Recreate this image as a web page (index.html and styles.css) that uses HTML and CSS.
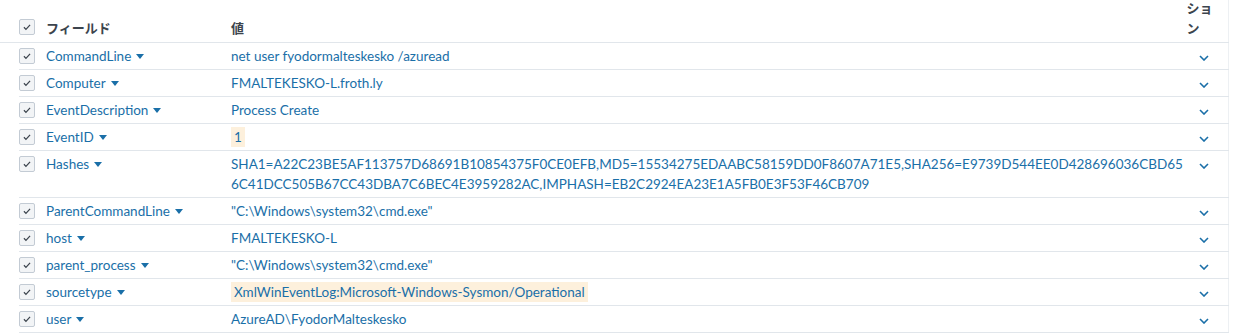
FILE: index.html
```html
<!DOCTYPE html>
<html lang="ja">

<head>
    <meta charset="UTF-8">
    <title>フィールド</title>
    <link rel="stylesheet" href="styles.css">
</head>

<body>
    <table class="fields">
        <colgroup>
            <col class="col-gap">
            <col class="col-check">
            <col class="col-name">
            <col>
            <col class="col-actions">
        </colgroup>
        <thead>
            <tr>
                <th></th>
                <th><span class="check"><svg viewBox="0 0 16 16"><path d="M4.5 8.3l2.3 2.4 4.7-5.2"/></svg></span></th>
                <th>フィールド</th>
                <th>値</th>
                <th class="actions-head">アクション</th>
            </tr>
        </thead>
        <tbody>
            <tr>
                <td></td>
                <td><span class="check"><svg viewBox="0 0 16 16"><path d="M4.5 8.3l2.3 2.4 4.7-5.2"/></svg></span></td>
                <td><a class="field">CommandLine<i class="caret"></i></a></td>
                <td class="value">net user fyodormalteskesko /azuread</td>
                <td class="actions"><svg class="chevron" viewBox="0 0 10 6"><path d="M1 1l4 4 4-4"/></svg></td>
            </tr>
            <tr>
                <td></td>
                <td><span class="check"><svg viewBox="0 0 16 16"><path d="M4.5 8.3l2.3 2.4 4.7-5.2"/></svg></span></td>
                <td><a class="field">Computer<i class="caret"></i></a></td>
                <td class="value">FMALTEKESKO-L.froth.ly</td>
                <td class="actions"><svg class="chevron" viewBox="0 0 10 6"><path d="M1 1l4 4 4-4"/></svg></td>
            </tr>
            <tr>
                <td></td>
                <td><span class="check"><svg viewBox="0 0 16 16"><path d="M4.5 8.3l2.3 2.4 4.7-5.2"/></svg></span></td>
                <td><a class="field">EventDescription<i class="caret"></i></a></td>
                <td class="value">Process Create</td>
                <td class="actions"><svg class="chevron" viewBox="0 0 10 6"><path d="M1 1l4 4 4-4"/></svg></td>
            </tr>
            <tr>
                <td></td>
                <td><span class="check"><svg viewBox="0 0 16 16"><path d="M4.5 8.3l2.3 2.4 4.7-5.2"/></svg></span></td>
                <td><a class="field">EventID<i class="caret"></i></a></td>
                <td class="value"><span class="mark">1</span></td>
                <td class="actions"><svg class="chevron" viewBox="0 0 10 6"><path d="M1 1l4 4 4-4"/></svg></td>
            </tr>
            <tr>
                <td></td>
                <td><span class="check"><svg viewBox="0 0 16 16"><path d="M4.5 8.3l2.3 2.4 4.7-5.2"/></svg></span></td>
                <td><a class="field">Hashes<i class="caret"></i></a></td>
                <td class="value">SHA1=A22C23BE5AF113757D68691B10854375F0CE0EFB,MD5=15534275EDAABC58159DD0F8607A71E5,SHA256=E9739D544EE0D428696036CBD65<wbr>6C41DCC505B67CC43DBA7C6BEC4E3959282AC,IMPHASH=EB2C2924EA23E1A5FB0E3F53F46CB709</td>
                <td class="actions"><svg class="chevron" viewBox="0 0 10 6"><path d="M1 1l4 4 4-4"/></svg></td>
            </tr>
            <tr>
                <td></td>
                <td><span class="check"><svg viewBox="0 0 16 16"><path d="M4.5 8.3l2.3 2.4 4.7-5.2"/></svg></span></td>
                <td><a class="field">ParentCommandLine<i class="caret"></i></a></td>
                <td class="value">"C:\Windows\system32\cmd.exe"</td>
                <td class="actions"><svg class="chevron" viewBox="0 0 10 6"><path d="M1 1l4 4 4-4"/></svg></td>
            </tr>
            <tr>
                <td></td>
                <td><span class="check"><svg viewBox="0 0 16 16"><path d="M4.5 8.3l2.3 2.4 4.7-5.2"/></svg></span></td>
                <td><a class="field">host<i class="caret"></i></a></td>
                <td class="value">FMALTEKESKO-L</td>
                <td class="actions"><svg class="chevron" viewBox="0 0 10 6"><path d="M1 1l4 4 4-4"/></svg></td>
            </tr>
            <tr>
                <td></td>
                <td><span class="check"><svg viewBox="0 0 16 16"><path d="M4.5 8.3l2.3 2.4 4.7-5.2"/></svg></span></td>
                <td><a class="field">parent_process<i class="caret"></i></a></td>
                <td class="value">"C:\Windows\system32\cmd.exe"</td>
                <td class="actions"><svg class="chevron" viewBox="0 0 10 6"><path d="M1 1l4 4 4-4"/></svg></td>
            </tr>
            <tr>
                <td></td>
                <td><span class="check"><svg viewBox="0 0 16 16"><path d="M4.5 8.3l2.3 2.4 4.7-5.2"/></svg></span></td>
                <td><a class="field">sourcetype<i class="caret"></i></a></td>
                <td class="value"><span class="mark">XmlWinEventLog:Microsoft-Windows-Sysmon/Operational</span></td>
                <td class="actions"><svg class="chevron" viewBox="0 0 10 6"><path d="M1 1l4 4 4-4"/></svg></td>
            </tr>
            <tr>
                <td></td>
                <td><span class="check"><svg viewBox="0 0 16 16"><path d="M4.5 8.3l2.3 2.4 4.7-5.2"/></svg></span></td>
                <td><a class="field">user<i class="caret"></i></a></td>
                <td class="value">AzureAD\FyodorMalteskesko</td>
                <td class="actions"><svg class="chevron" viewBox="0 0 10 6"><path d="M1 1l4 4 4-4"/></svg></td>
            </tr>
        </tbody>
    </table>
</body>

</html>
```

FILE: styles.css
```css
* {
    margin: 0;
    padding: 0;
    box-sizing: border-box;
}

body {
    background: #ffffff;
    font-family: 'Lato', 'Noto Sans CJK JP', sans-serif;
    font-size: 13.5px;
    color: #3c444d;
    overflow: hidden;
}

.fields {
    width: 1229px;
    margin-top: -26px;
    border-collapse: collapse;
    table-layout: fixed;
    border-right: 1px solid #edf0f3;
}

.col-gap {
    width: 19px;
}

.col-check {
    width: 27px;
}

.col-name {
    width: 185px;
}

.col-actions {
    width: 49px;
}

.fields th {
    text-align: left;
    vertical-align: bottom;
    font-family: 'Noto Sans CJK JP', sans-serif;
    font-size: 13px;
    font-weight: 700;
    line-height: 20px;
    padding: 4px 0 4px 0;
    color: #3c444d;
    border-bottom: 1px solid #e1e6eb;
}

.fields th:nth-child(2) {
    padding-bottom: 7px;
}

.fields th.actions-head {
    padding: 4px 7px;
}

.fields td {
    vertical-align: top;
    line-height: 20px;
    padding: 3px 0;
    border-bottom: 1px solid #e1e6eb;
}

.fields td:first-child {
    border-bottom: none;
}

.check {
    display: block;
    width: 16px;
    height: 16px;
    margin-top: 2px;
    border: 1px solid #c3cbd4;
    border-radius: 2px;
    background: #f2f4f6;
}

.check svg {
    display: block;
    width: 14px;
    height: 14px;
    fill: none;
    stroke: #3c444d;
    stroke-width: 1.4;
}

.field {
    color: #1a6fa8;
}

.caret {
    display: inline-block;
    width: 0;
    height: 0;
    margin-left: 5px;
    vertical-align: 2px;
    border-left: 4px solid transparent;
    border-right: 4px solid transparent;
    border-top: 5px solid #1a6fa8;
}

.value {
    color: #1a6fa8;
}

.mark {
    display: inline-block;
    padding: 0 3px;
    background: #fdf0dc;
}

.actions {
    padding: 3px 7px !important;
    text-align: center;
}

.chevron {
    width: 10px;
    height: 6px;
    margin-top: 7px;
    fill: none;
    stroke: #1a6fa8;
    stroke-width: 1.6;
}
```
